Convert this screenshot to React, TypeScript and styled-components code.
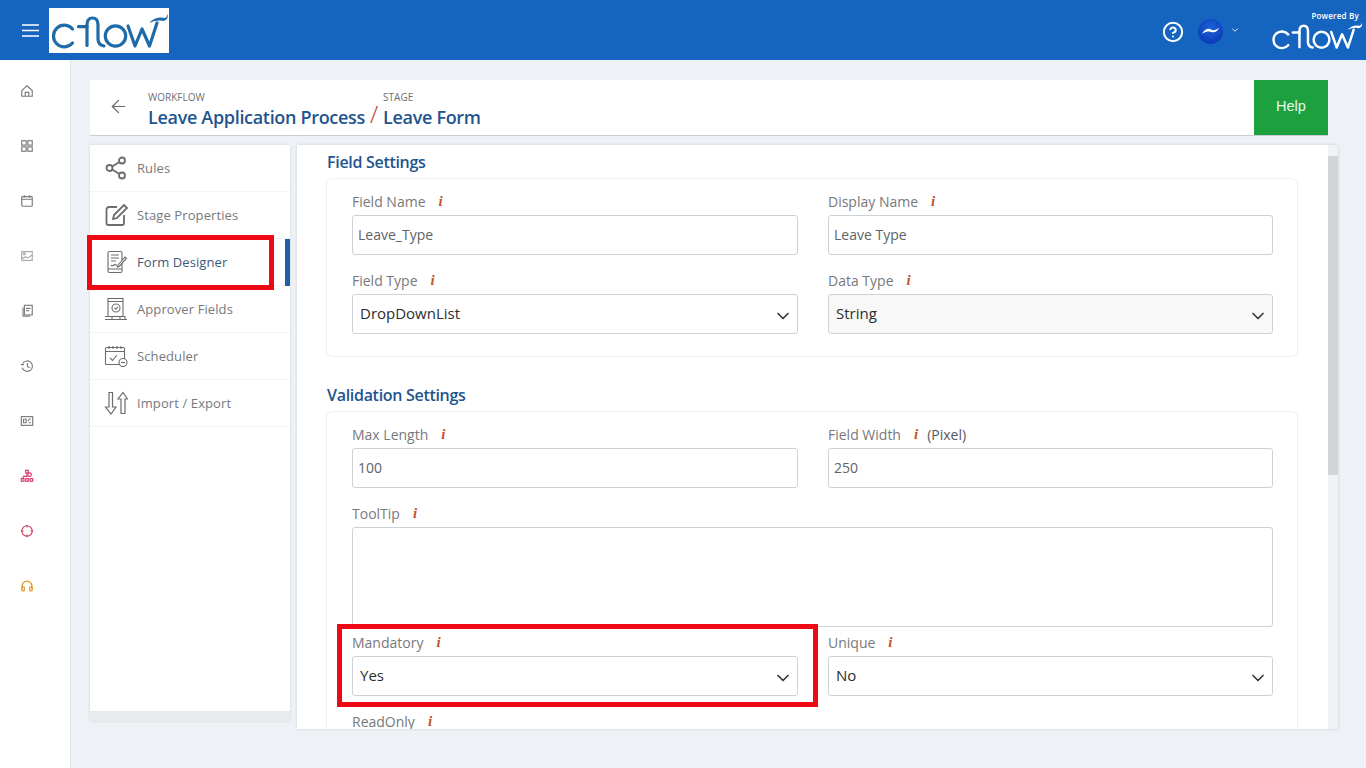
import styled, { createGlobalStyle } from "styled-components";
import { ArrowLeft, ChevronDown, CircleHelp } from "lucide-react";

const GlobalStyle = createGlobalStyle`
  html, body {
    margin: 0;
    padding: 0;
    height: 100%;
    overflow: hidden;
    background: #eef1f5;
    font-family: "Open Sans", "Liberation Sans", sans-serif;
  }
  * {
    box-sizing: border-box;
  }
`;

const Page = styled.div`
  width: 1366px;
  height: 768px;
  display: flex;
  flex-direction: column;
  overflow: hidden;
`;

const Header = styled.header`
  height: 60px;
  flex: none;
  background: #1565c0;
  display: flex;
  align-items: center;
  padding: 0 3px 0 22px;
  color: #fff;
`;

const MenuBtn = styled.div`
  width: 27px;
  display: flex;
  align-items: center;
`;

const LogoBox = styled.div`
  width: 120px;
  height: 45px;
  background: #fff;
  svg {
    display: block;
  }
`;

const HeaderRight = styled.div`
  margin-left: auto;
  display: flex;
  align-items: center;
`;

const HelpIcon = styled.div`
  display: flex;
  margin: 3px 14px 0 0;
  svg {
    width: 22px;
    height: 22px;
  }
`;

const Avatar = styled.div`
  width: 25px;
  height: 25px;
  margin-top: 2px;
  border-radius: 50%;
  background: radial-gradient(circle at 50% 35%, #1a63d8, #0a2fb0);
  display: flex;
  align-items: center;
  justify-content: center;
`;

const Caret = styled.div`
  display: flex;
  margin: 0 30px 0 7px;
  svg {
    width: 10px;
    height: 10px;
  }
`;

const Powered = styled.div`
  width: 93px;
  display: flex;
  flex-direction: column;
  align-items: flex-end;
  margin-top: 2px;
`;

const PoweredText = styled.span`
  font-size: 8px;
  font-weight: 600;
  line-height: 11px;
  letter-spacing: 0.2px;
  margin-right: 4px;
  margin-bottom: -3px;
`;

const Body = styled.div`
  flex: 1;
  display: flex;
  min-height: 0;
`;

const Rail = styled.nav`
  width: 71px;
  flex: none;
  background: #fff;
  border-right: 1px solid #dfe3e8;
  display: flex;
  flex-direction: column;
  padding-top: 3px;
`;

const RailItem = styled.div<{ $color?: string }>`
  height: 55px;
  display: flex;
  align-items: center;
  justify-content: center;
  padding-right: 16px;
  color: ${(p) => p.$color || "#77797c"};
  svg {
    width: 14px;
    height: 14px;
    fill: none;
    stroke: currentColor;
    stroke-width: 1.3;
  }
`;

const Main = styled.main`
  flex: 1;
  min-width: 0;
  padding: 20px 28px 0 19px;
  display: flex;
  flex-direction: column;
`;

const TitleBar = styled.div`
  height: 56px;
  flex: none;
  margin-right: 10px;
  background: #fff;
  border-bottom: 1px solid #c9ccd0;
  display: flex;
`;

const BackBtn = styled.div`
  width: 58px;
  display: flex;
  align-items: center;
  justify-content: center;
  color: #66696d;
  padding: 0 2px 2px 0;
  svg {
    width: 21px;
    height: 21px;
  }
`;

const Crumb = styled.div`
  display: flex;
  flex-direction: column;
  padding-top: 10px;
`;

const CrumbLabel = styled.span`
  font-size: 10px;
  line-height: 14px;
  color: #6c6f73;
`;

const CrumbValue = styled.span`
  font-size: 18px;
  line-height: 26px;
  font-weight: 600;
  color: #22548f;
  letter-spacing: -0.32px;
`;

const Slash = styled.span`
  font-size: 24px;
  line-height: 30px;
  color: #c0392b;
  margin: 19px 5px 0 5px;
  font-weight: 300;
`;

const HelpBtn = styled.div`
  margin-left: auto;
  width: 74px;
  height: 55px;
  padding-bottom: 3px;
  background: #1ca13e;
  color: #e8fbe9;
  font-family: "Liberation Sans", sans-serif;
  font-size: 14.5px;
  display: flex;
  align-items: center;
  justify-content: center;
`;

const Columns = styled.div`
  flex: none;
  height: 584px;
  margin-top: 9px;
  display: flex;
  gap: 7px;
`;

const SideMenu = styled.aside`
  width: 200px;
  height: 576px;
  background: #fff;
  box-shadow: 0 0 3px rgba(0, 0, 0, 0.12);
  display: flex;
  flex-direction: column;
`;

const MenuList = styled.div`
  flex: 1;
`;

const MenuScroll = styled.div`
  height: 10px;
  background: #e9eaec;
`;

const MenuRow = styled.div<{ $active?: boolean }>`
  position: relative;
  height: 47px;
  display: flex;
  align-items: center;
  padding-left: 14px;
  gap: 9px;
  border-bottom: 1px solid #f3f4f5;
  font-size: 13px;
  letter-spacing: 0.1px;
  color: ${(p) => (p.$active ? "#3d5a78" : "#77797c")};
  svg {
    width: 24px;
    height: 24px;
    flex: none;
    fill: none;
    stroke: #6a6c6f;
    stroke-width: 1.1;
  }
  ${(p) =>
    p.$active &&
    `&::after {
      content: "";
      position: absolute;
      right: 0;
      top: 0;
      width: 5px;
      height: 47px;
      background: #1f5fa8;
    }`}
`;

const Panel = styled.section`
  width: 1041px;
  height: 584px;
  background: #fff;
  box-shadow: 0 0 3px rgba(0, 0, 0, 0.14);
  display: flex;
  overflow: hidden;
`;

const PanelBody = styled.div`
  flex: 1;
  min-width: 0;
  padding: 5px 30px 0 29px;
  overflow: hidden;
`;

const Track = styled.div`
  width: 10px;
  flex: none;
  background: #f1f2f3;
  padding-top: 11px;
`;

const Thumb = styled.div`
  height: 319px;
  background: #d3d4d6;
`;

const SectionTitle = styled.h2`
  margin: 0 0 0 1px;
  font-size: 16px;
  line-height: 24px;
  font-weight: 600;
  color: #22548f;
  letter-spacing: -0.3px;
`;

const Group = styled.div`
  margin-top: 4px;
  margin-bottom: 26px;
  border: 1px solid #eef0f2;
  border-radius: 6px;
  padding: 11px 25px 22px 25px;
  display: grid;
  grid-template-columns: 446px 445px;
  column-gap: 30px;
  row-gap: 14px;
`;

const Field = styled.div<{ $wide?: boolean }>`
  grid-column: ${(p) => (p.$wide ? "1 / -1" : "auto")};
  min-width: 0;
`;

const Label = styled.div`
  height: 25px;
  display: flex;
  align-items: center;
  padding-bottom: 2px;
  font-size: 14px;
  color: #77797c;
  white-space: nowrap;
`;

const InfoMark = styled.i`
  font-family: "Liberation Serif", serif;
  font-weight: 700;
  font-size: 15px;
  color: #c2552d;
  margin-left: 13px;
`;

const LabelSuffix = styled.span`
  font-size: 14px;
  color: #55585b;
  margin-left: 9px;
`;

const Box = styled.div`
  height: 40px;
  border: 1px solid #cfd1d4;
  border-radius: 3px;
  background: #fff;
  display: flex;
  align-items: center;
  padding: 0 5px 2px;
  font-size: 14px;
  color: #606366;
`;

const SelectBox = styled(Box)<{ $muted?: boolean }>`
  padding: 0 4px 2px 7px;
  justify-content: space-between;
  color: #2b2d30;
  font-size: 15px;
  background: ${(p) => (p.$muted ? "#f8f8f8" : "#fff")};
  svg {
    width: 20px;
    height: 20px;
    margin-top: 6px;
    stroke-width: 2;
    color: #33363a;
  }
`;

const AreaBox = styled(Box)`
  height: 100px;
  margin-bottom: -10px;
`;

const Highlight = styled.div`
  position: absolute;
  border: 5px solid #ee0a14;
  pointer-events: none;
`;

const FormHighlight = styled(Highlight)`
  left: 87px;
  top: 235px;
  width: 187px;
  height: 55px;
`;

const MandatoryHighlight = styled(Highlight)`
  left: 337px;
  top: 624px;
  width: 481px;
  height: 83px;
`;

const CflowMark = ({ color, w, h }: { color: string; w: number; h: number }) => (
  <svg width={w} height={h} viewBox="0 0 120 45" fill="none" aria-hidden="true">
    <g stroke={color} strokeWidth="3.2" strokeLinecap="round" strokeLinejoin="round">
      <path d="M23.500 21 A10.800 10.800 0 1 0 23.500 35" />
      <path d="M29.500 18.700 H38" />
      <path d="M38 37.500 V17 Q38 10 43.500 10 Q49 10 49 17 V31 Q49 37 55 38" />
      <circle cx="66.500" cy="28" r="10.200" />
      <path d="M79 18 L86 38 L93 21 L100.500 38 L108 15" />
    </g>
    <path d="M100 15 Q107 8 116 10 Q118 9 118.500 6 Q120 11 115 13 Q108 11.500 100 15 Z" fill={color} />
  </svg>
);

const railIcons = [
  <svg viewBox="0 0 16 16"><path d="M2 7.500 8 2l6 5.500V14H2Z" /><path d="M6 14V9.500h4V14" /></svg>,
  <svg viewBox="0 0 16 16"><rect x="2" y="2" width="5" height="5" /><rect x="9" y="2" width="5" height="5" /><rect x="2" y="9" width="5" height="5" /><rect x="9" y="9" width="5" height="5" /></svg>,
  <svg viewBox="0 0 16 16"><rect x="2" y="3" width="12" height="11" rx="1" /><path d="M2 6h12M5 1.500V4M11 1.500V4" /></svg>,
  <svg viewBox="0 0 16 16" opacity="0.65"><rect x="2" y="3" width="12" height="10" /><path d="M2 11l4-2 3 1 5-3" /><circle cx="5" cy="5.500" r="1" /></svg>,
  <svg viewBox="0 0 16 16"><rect x="5" y="1.500" width="9" height="11" /><path d="M3.500 4v10h8M7 5h5M7 7.500h3" /></svg>,
  <svg viewBox="0 0 16 16"><path d="M3 5.200A6 6 0 1 1 2.500 10" /><path d="M1 6.500h3.500M8.500 4.500V8.500L11 10" /></svg>,
  <svg viewBox="0 0 16 16"><rect x="1.500" y="3" width="13" height="10" /><path d="M4 6h3v4H4zM9 8l3-3M10 10h2.500" /></svg>,
  <svg viewBox="0 0 16 16"><circle cx="11" cy="6.500" r="2" /><rect x="6.500" y="1.500" width="3" height="3" /><path d="M8 4.500V8M3.500 8.500H9M3.500 8.500v2.500" /><rect x="1.500" y="11" width="3" height="3" /><rect x="6.500" y="11" width="3" height="3" /><rect x="11.500" y="11" width="3" height="3" /></svg>,
  <svg viewBox="0 0 16 16"><circle cx="8" cy="8" r="6" /><path d="M8 1v3M8 12v3M1 8h3M12 8h3" /></svg>,
  <svg viewBox="0 0 16 16"><path d="M2.500 11V8a5.500 5.500 0 0 1 11 0v3" strokeWidth="1.8" /><rect x="2" y="9" width="3" height="4.500" rx="1" strokeWidth="1.6" /><rect x="11" y="9" width="3" height="4.500" rx="1" strokeWidth="1.6" /></svg>,
];

const railColors = [
  undefined,
  undefined,
  undefined,
  undefined,
  undefined,
  undefined,
  undefined,
  "#d9366b",
  "#c93a5c",
  "#e3a23c",
];

const menuItems = [
  {
    name: "Rules",
    icon: (
      <svg viewBox="0 0 24 24" style={{ strokeWidth: 1.8 }}>
        <circle cx="5.500" cy="12" r="3" />
        <circle cx="18" cy="4.500" r="3" />
        <circle cx="18" cy="19.500" r="3" />
        <path d="M8 10.500 15.500 6M8 13.500l7.500 4.500" />
      </svg>
    ),
  },
  {
    name: "Stage Properties",
    icon: (
      <svg viewBox="0 0 24 24" style={{ strokeWidth: 1.8 }}>
        <path d="M13 4H5a2.500 2.500 0 0 0-2.500 2.500V20A2 2 0 0 0 4.500 22H18a2 2 0 0 0 2-2v-8" />
        <path d="M9 16l1-4L20 2l3 3-10 10Z" />
      </svg>
    ),
  },
  {
    name: "Form Designer",
    active: true,
    icon: (
      <svg viewBox="0 0 24 24">
        <rect x="4" y="1.500" width="14" height="21" rx="1.500" />
        <path d="M7 5h8M7 8h8M7 11h5M4 19h14M7 16c1-2 2 1 3-1s2 1 3 0" />
        <path d="M14 15l7-8 1.500 1.200-7 8-2 .8Z" fill="#fff" />
      </svg>
    ),
  },
  {
    name: "Approver Fields",
    icon: (
      <svg viewBox="0 0 24 24">
        <rect x="4" y="1.500" width="15" height="18" />
        <path d="M4 4.500h15M1 22.500h22M1 19.500h7v3M16 22.500v-3h5v3" />
        <circle cx="12" cy="11" r="4" />
        <path d="M10.500 11l1.200 1.200 2-2.400" />
      </svg>
    ),
  },
  {
    name: "Scheduler",
    icon: (
      <svg viewBox="0 0 24 24">
        <rect x="1.500" y="3.500" width="19" height="17" rx="1" />
        <path d="M1.500 7.500h19M5 2v3M9 2v3M13 2v3M17 2v3M6 14l2.500 2.500L13 11" />
        <circle cx="19" cy="18.500" r="4" fill="#fff" />
        <path d="M17 18.500h4" />
      </svg>
    ),
  },
  {
    name: "Import / Export",
    icon: (
      <svg viewBox="0 0 24 24" style={{ strokeWidth: 1.2 }}>
        <path d="M5 1.500h3.500V16H12l-5 7-5.500-7H5Z" />
        <path d="M17 8h-3l5-6.500L23.500 8H21v14.500h-4Z" />
      </svg>
    ),
  },
];

const Info = () => <InfoMark>i</InfoMark>;

const App = () => {
  return (
    <Page>
      <GlobalStyle />
      <Header>
        <MenuBtn>
          <svg width="17" height="13" viewBox="0 0 17 13" aria-hidden="true">
            <path d="M0 1h17M0 6.500h17M0 12h17" stroke="#fff" strokeWidth="1.7" />
          </svg>
        </MenuBtn>
        <LogoBox>
          <CflowMark color="#1f6aa8" w={120} h={45} />
        </LogoBox>
        <HeaderRight>
          <HelpIcon>
            <CircleHelp strokeWidth={2.2} />
          </HelpIcon>
          <Avatar>
            <svg width="17" height="8" viewBox="0 0 17 8" aria-hidden="true">
              <path d="M0 7C3 2 6 1 9 2.500S14 3 17 .5C16 4 13 6 9 5S3 5 0 7Z" fill="#fff" />
            </svg>
          </Avatar>
          <Caret>
            <ChevronDown strokeWidth={2} />
          </Caret>
          <Powered>
            <PoweredText>Powered By</PoweredText>
            <CflowMark color="#fff" w={93} h={35} />
          </Powered>
        </HeaderRight>
      </Header>
      <Body>
        <Rail>
          {railIcons.map((icon, i) => (
            <RailItem key={i} $color={railColors[i]}>
              {icon}
            </RailItem>
          ))}
        </Rail>
        <Main>
          <TitleBar>
            <BackBtn>
              <ArrowLeft strokeWidth={1.4} />
            </BackBtn>
            <Crumb>
              <CrumbLabel>WORKFLOW</CrumbLabel>
              <CrumbValue>Leave Application Process</CrumbValue>
            </Crumb>
            <Slash>/</Slash>
            <Crumb>
              <CrumbLabel>STAGE</CrumbLabel>
              <CrumbValue>Leave Form</CrumbValue>
            </Crumb>
            <HelpBtn>Help</HelpBtn>
          </TitleBar>
          <Columns>
            <SideMenu>
              <MenuList>
                {menuItems.map((item) => (
                  <MenuRow key={item.name} $active={item.active}>
                    {item.icon}
                    {item.name}
                  </MenuRow>
                ))}
              </MenuList>
              <MenuScroll />
            </SideMenu>
            <Panel>
              <PanelBody>
                <SectionTitle>Field Settings</SectionTitle>
                <Group>
                  <Field>
                    <Label>Field Name<Info /></Label>
                    <Box>Leave_Type</Box>
                  </Field>
                  <Field>
                    <Label>Display Name<Info /></Label>
                    <Box>Leave Type</Box>
                  </Field>
                  <Field>
                    <Label>Field Type<Info /></Label>
                    <SelectBox>DropDownList<ChevronDown /></SelectBox>
                  </Field>
                  <Field>
                    <Label>Data Type<Info /></Label>
                    <SelectBox $muted>String<ChevronDown /></SelectBox>
                  </Field>
                </Group>
                <SectionTitle>Validation Settings</SectionTitle>
                <Group>
                  <Field>
                    <Label>Max Length<Info /></Label>
                    <Box>100</Box>
                  </Field>
                  <Field>
                    <Label>Field Width<Info /><LabelSuffix>(Pixel)</LabelSuffix></Label>
                    <Box>250</Box>
                  </Field>
                  <Field $wide>
                    <Label>ToolTip<Info /></Label>
                    <AreaBox />
                  </Field>
                  <Field>
                    <Label>Mandatory<Info /></Label>
                    <SelectBox>Yes<ChevronDown /></SelectBox>
                  </Field>
                  <Field>
                    <Label>Unique<Info /></Label>
                    <SelectBox>No<ChevronDown /></SelectBox>
                  </Field>
                  <Field>
                    <Label>ReadOnly<Info /></Label>
                  </Field>
                </Group>
              </PanelBody>
              <Track>
                <Thumb />
              </Track>
            </Panel>
          </Columns>
        </Main>
      </Body>
      <FormHighlight />
      <MandatoryHighlight />
    </Page>
  );
};

export default App;
